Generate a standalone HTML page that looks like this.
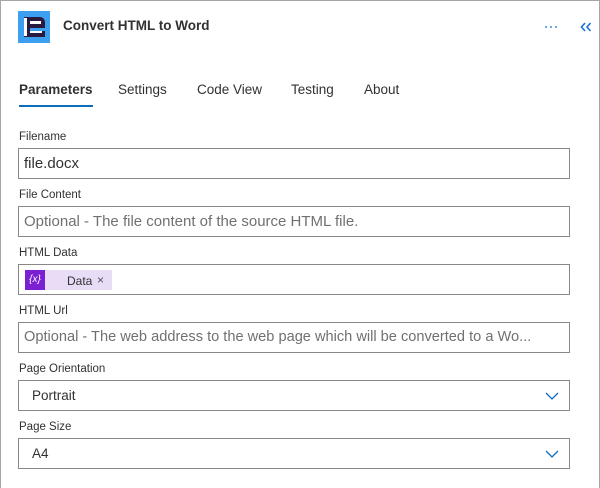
<!DOCTYPE html>
<html><head><style>
*{box-sizing:border-box;margin:0;padding:0}
body{width:600px;height:488px;background:#fff;font-family:"Segoe UI","Liberation Sans",sans-serif;color:#323130;overflow:hidden}
.frame{position:absolute;left:0;top:0;width:600px;height:488px;border:1px solid #a6a6a6;border-bottom:none}
.abs{position:absolute}
.tab{position:absolute;top:82px;font-size:13.5px;color:#323130}
.lbl{position:absolute;left:19px;font-size:11.5px;color:#323130}
.inp{position:absolute;left:18px;width:552px;height:31px;border:1px solid #8a8886;font-size:15px;padding-left:5px;line-height:29px;color:#323130;white-space:nowrap;overflow:hidden}
.ph{color:#707070}
</style></head><body>
<div class="frame"></div>
<svg class="abs" style="left:18px;top:11px" width="32" height="32" viewBox="0 0 32 32">
<rect width="32" height="32" fill="#3d9ff0"/>
<path d="M6 6h16a5 5 0 0 1 5 5v6H12v3h15v6H6z" fill="#2b1a3f"/>
<rect x="6" y="7" width="3" height="18" fill="#fff"/>
<rect x="12" y="10" width="11" height="3" fill="#fff"/>
<rect x="12" y="20" width="12" height="2" fill="#fff"/>
</svg>
<div class="abs" style="left:63px;top:18px;font-size:13.5px;font-weight:600">Convert HTML to Word</div>
<svg class="abs" style="left:544px;top:25px" width="14" height="4"><circle cx="2" cy="2" r="1" fill="#3a8ee6"/><circle cx="7" cy="2" r="1" fill="#3a8ee6"/><circle cx="12" cy="2" r="1" fill="#3a8ee6"/></svg>
<svg class="abs" style="left:580px;top:22px" width="12" height="10" viewBox="0 0 12 10"><path d="M5 1L1.5 5 5 9M10.5 1L7 5 10.5 9" fill="none" stroke="#1a73d8" stroke-width="1.6"/></svg>
<div class="tab" style="left:19px;font-weight:600">Parameters</div>
<div class="abs" style="left:19px;top:105px;width:74px;height:2px;background:#0f6cbd"></div>
<div class="tab" style="left:118px">Settings</div>
<div class="tab" style="left:197px">Code View</div>
<div class="tab" style="left:291px">Testing</div>
<div class="tab" style="left:364px">About</div>

<div class="lbl" style="top:131px">Filename</div>
<div class="inp" style="top:148px">file.docx</div>
<div class="lbl" style="top:189px">File Content</div>
<div class="inp" style="top:206px"><span class="ph">Optional - The file content of the source HTML file.</span></div>
<div class="lbl" style="top:247px">HTML Data</div>
<div class="inp" style="top:264px">
<div class="abs" style="left:6px;top:5px;width:87px;height:20px;background:#e8dcf7"></div>
<div class="abs" style="left:6px;top:5px;width:20px;height:20px;background:#7a1fd1;color:#fff;font-size:10px;line-height:20px;text-align:center;font-style:italic">{x}</div>
<div class="abs" style="left:48px;top:5px;font-size:12px;line-height:22px">Data</div>
<div class="abs" style="left:78px;top:4px;font-size:12px;line-height:22px;color:#555">×</div>
</div>
<div class="lbl" style="top:305px">HTML Url</div>
<div class="inp" style="top:322px;font-size:14.6px"><span class="ph">Optional - The web address to the web page which will be converted to a Wo...</span></div>
<div class="lbl" style="top:363px">Page Orientation</div>
<div class="inp" style="top:380px;padding-left:13px;font-size:13.5px">Portrait
<svg class="abs" style="right:10px;top:11px" width="14" height="8" viewBox="0 0 14 8"><path d="M1 1l6 6 6-6" fill="none" stroke="#0f6cbd" stroke-width="1.3"/></svg></div>
<div class="lbl" style="top:421px">Page Size</div>
<div class="inp" style="top:438px;padding-left:13px;font-size:13.5px">A4
<svg class="abs" style="right:10px;top:11px" width="14" height="8" viewBox="0 0 14 8"><path d="M1 1l6 6 6-6" fill="none" stroke="#0f6cbd" stroke-width="1.3"/></svg></div>
</body></html>
